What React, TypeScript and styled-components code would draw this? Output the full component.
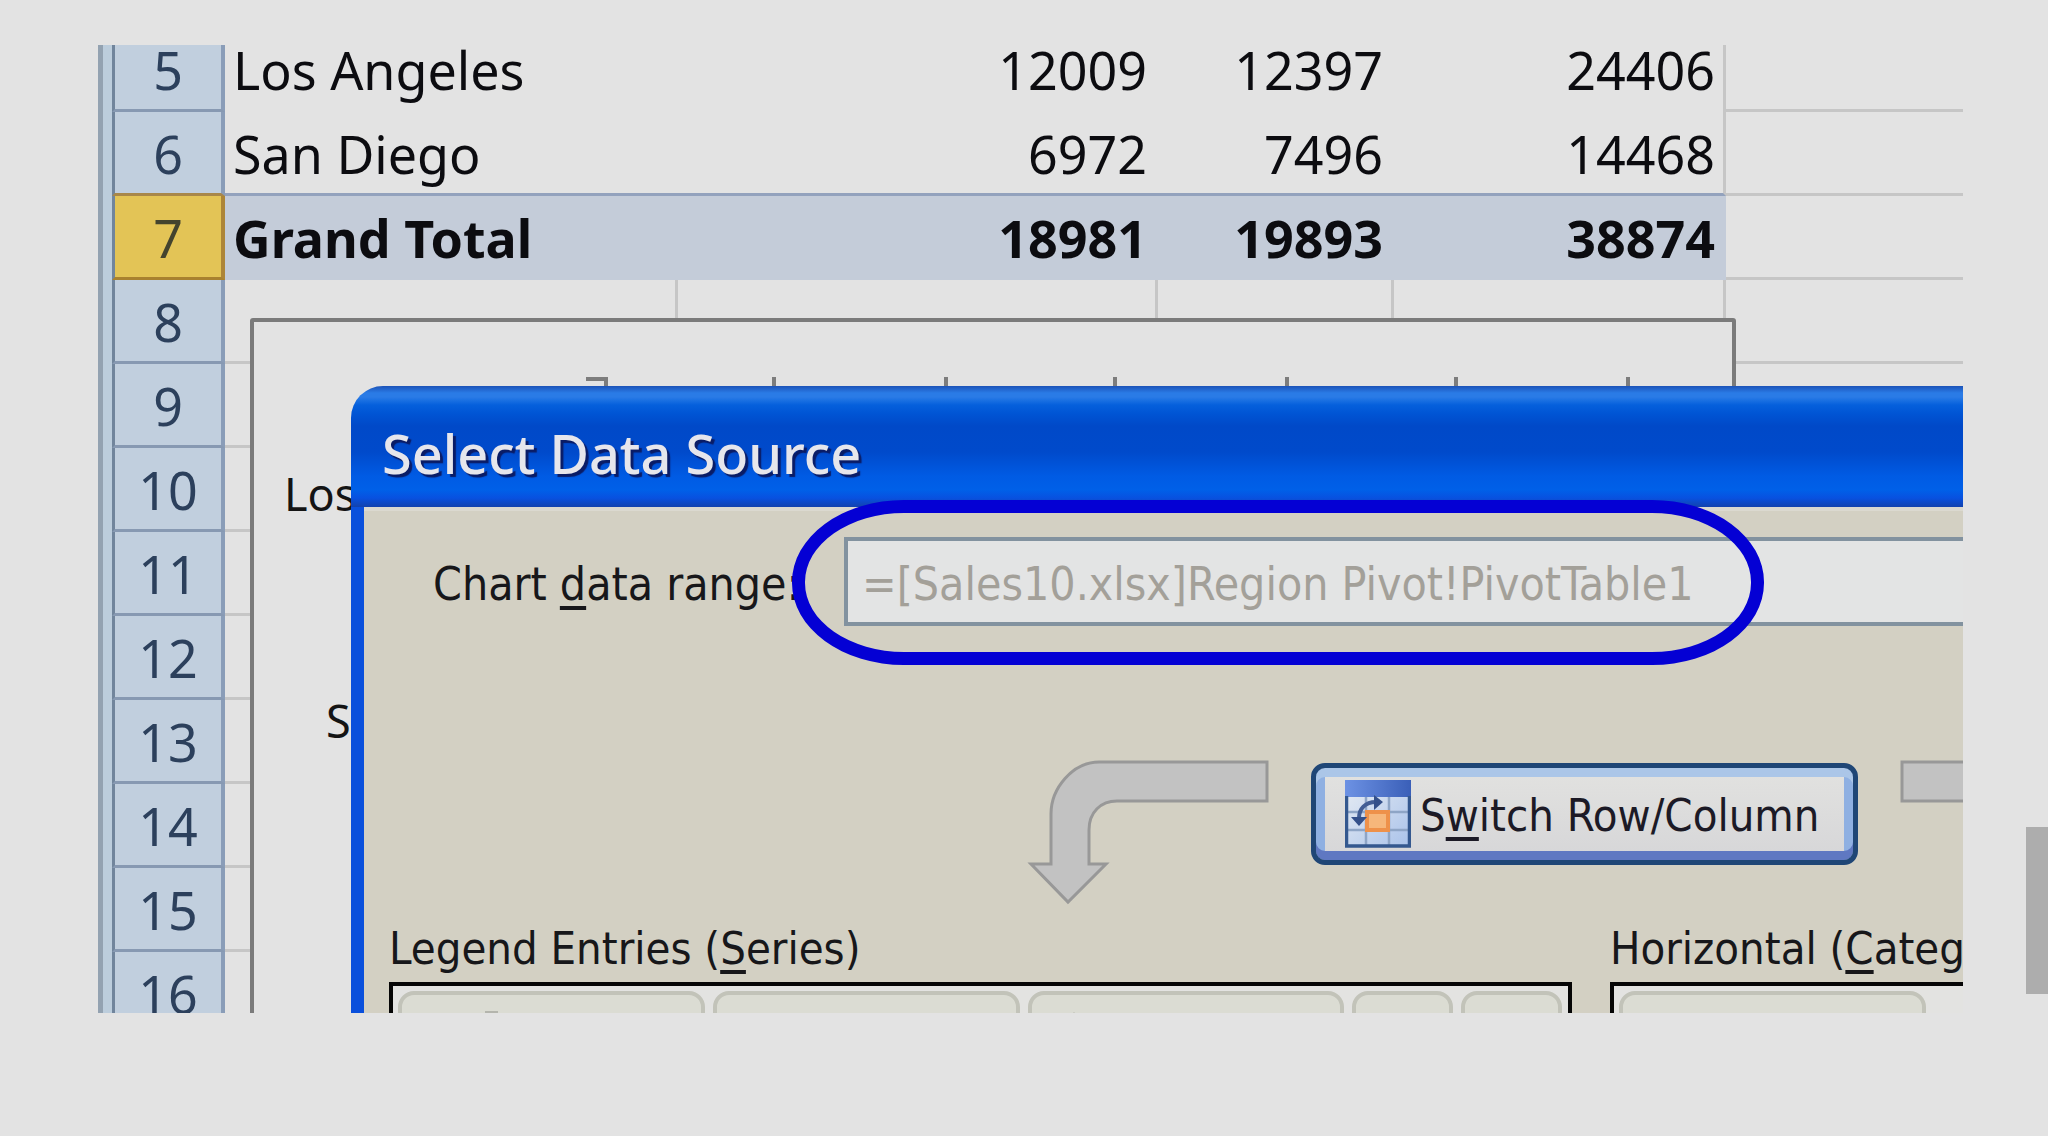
import React from "react";
import styled, { createGlobalStyle } from "styled-components";

const GlobalStyle = createGlobalStyle`
  *, *::before, *::after { box-sizing: border-box; }
  html, body { margin: 0; background: #e3e3e3; }
`;

const sheetFont = `"Noto Sans", "Open Sans", sans-serif`;
const dialogFont = `"DejaVu Sans Condensed", "Noto Sans", sans-serif`;

const Page = styled.div`
  position: relative;
  display: flex;
  height: 100vh;
  padding: 45px 85px 123px 98px;
  overflow: hidden;
  background: #e3e3e3;
`;

const ScrollThumb = styled.div`
  position: absolute;
  top: 827px;
  right: 0;
  width: 22px;
  height: 167px;
  background: #adadad;
`;

const Workbook = styled.main`
  position: relative;
  display: flex;
  align-items: flex-start;
  flex: 1;
  min-width: 0;
  overflow: hidden;
`;

const WindowEdge = styled.div`
  flex: 0 0 14px;
  align-self: stretch;
  background: #bccddc;
  border-left: 5px solid #93a2b1;
`;

const Sheet = styled.table`
  flex: 1;
  width: 100%;
  min-width: 0;
  table-layout: fixed;
  border-collapse: separate;
  border-spacing: 0;
  font-family: ${sheetFont};
  font-size: 52px;
  line-height: 50px;
  color: #0c0c10;
`;

const Col = styled.col<{ $w?: number }>`
  width: ${(p) => (p.$w ? `${p.$w}px` : "auto")};
`;

const Row = styled.tr<{ $first: boolean }>`
  height: ${(p) => (p.$first ? 67 : 84)}px;

  > * {
    padding-top: ${(p) => (p.$first ? 0 : 17)}px;
    padding-bottom: 0;
    vertical-align: top;
  }
`;

const RowHead = styled.th<{ $active: boolean; $beforeActive: boolean }>`
  padding-left: 0;
  padding-right: 0;
  font-weight: 400;
  text-align: center;
  color: ${(p) => (p.$active ? "#44442e" : "#2c405c")};
  background: ${(p) => (p.$active ? "#e3c456" : "#c1cfde")};
  border-left: 3px solid #71859c;
  border-right: 4px solid ${(p) => (p.$active ? "#ad8538" : "#8a9db8")};
  border-bottom: 3px solid
    ${(p) => (p.$active ? "#a8812f" : p.$beforeActive ? "#a8874a" : "#8799b2")};
`;

const Cell = styled.td<{
  $numeric?: boolean;
  $total?: boolean;
  $line?: string;
  $edge?: string;
}>`
  padding-left: 8px;
  padding-right: ${(p) => (p.$edge ? 8 : 11)}px;
  text-align: ${(p) => (p.$numeric ? "right" : "left")};
  font-weight: ${(p) => (p.$total ? 700 : 400)};
  white-space: nowrap;
  background: ${(p) => (p.$total ? "#c4ccd9" : "#e3e3e3")};
  border-bottom: ${(p) => (p.$line ? `3px solid ${p.$line}` : "0")};
  border-right: ${(p) => (p.$edge ? `3px solid ${p.$edge}` : "0")};
`;

const ChartFrame = styled.section`
  position: absolute;
  top: 273px;
  left: 152px;
  width: 1486px;
  bottom: -40px;
  padding: 142px 0 0 30px;
  background: #e3e3e3;
  border: 4px solid #7b7b7b;
  border-radius: 3px;
`;

const AxisTicks = styled.svg`
  position: absolute;
  top: 55px;
  left: 330px;
  width: 1060px;
  height: 14px;
`;

const AxisLabel = styled.div<{ $indent: number }>`
  height: 227px;
  padding-left: ${(p) => p.$indent}px;
  font-family: "Noto Sans", sans-serif;
  font-size: 45px;
  line-height: 60px;
  color: #141414;
`;

const Dialog = styled.section`
  position: absolute;
  top: 341px;
  left: 253px;
  right: 0;
  bottom: 0;
  display: flex;
  flex-direction: column;
  overflow: hidden;
  border-radius: 32px 0 0 0;
  font-family: ${dialogFont};
  font-size: 45px;
  line-height: 60px;
  color: #17171a;
`;

const TitleBar = styled.header`
  flex: 0 0 121px;
  padding: 30px 0 0 31px;
  background: linear-gradient(
    to bottom,
    #1c53b8 0,
    #2a7be6 7px,
    #2a7be6 11px,
    #0560dc 19px,
    #0054d4 28px,
    #0049c8 40px,
    #004acb 66px,
    #005be4 90px,
    #0060e8 104px,
    #0851e0 112px,
    #1242ae 121px
  );
`;

const Title = styled.h1`
  margin: 0;
  font-family: "Noto Sans", sans-serif;
  font-size: 54px;
  line-height: 74px;
  font-weight: 500;
  color: #e6e6ec;
  text-shadow: 3px 3px 1px #0a1c66;
`;

const Body = styled.div`
  flex: 1;
  min-height: 0;
  padding: 30px 0 0 25px;
  background: #d3d0c3;
  border-left: 13px solid #0a50dc;
  box-shadow: inset 0 4px 0 #dbd9d0;
`;

const RangeRow = styled.div`
  position: relative;
  display: flex;
  align-items: center;
  padding-left: 44px;
  font-size: 46px;
`;

const RangeLabel = styled.label`
  flex: 0 0 411px;
  padding-top: 4px;
  white-space: nowrap;
`;

const RangeInput = styled.input`
  flex: 1;
  min-width: 0;
  height: 89px;
  padding: 4px 0 0 14px;
  font: inherit;
  color: #a3a099;
  background: #e3e4e4;
  border: 4px solid #82929f;
  border-right: 0;
  border-radius: 0;
  outline: none;
`;

const Callout = styled.div`
  position: absolute;
  top: -37px;
  left: 403px;
  width: 972px;
  height: 165px;
  border: 13px solid #0400d4;
  border-radius: 112px / 82px;
  pointer-events: none;
`;

const Key = styled.u`
  text-decoration-thickness: 4px;
  text-underline-offset: 6px;
  text-decoration-skip-ink: none;
`;

const SwitchRow = styled.div`
  display: flex;
  align-items: flex-start;
  gap: 42px;
  margin-top: 134px;
  padding-left: 638px;
`;

const Arrow = styled.svg`
  flex: none;
  width: 242px;
  height: 145px;
`;

const SwitchButton = styled.button`
  display: flex;
  align-items: center;
  flex: none;
  gap: 9px;
  width: 547px;
  height: 102px;
  margin-top: 3px;
  padding: 0 0 0 29px;
  font: inherit;
  color: #1c1a26;
  white-space: nowrap;
  background: linear-gradient(#e2e2e0, #d6d6d8);
  border: 5px solid #1f4676;
  border-radius: 14px;
  box-shadow: inset 0 9px 0 #abc6e8, inset 0 -9px 0 #5f78c2,
    inset 9px 0 0 #8fb0e2, inset -9px 0 0 #8fb0e2;
`;

const SwitchText = styled.span`
  padding-top: 4px;
`;

const SwitchIcon = styled.svg`
  flex: none;
  width: 66px;
  height: 68px;
`;

const Panels = styled.div`
  display: flex;
  gap: 38px;
  margin-top: 14px;
`;

const Panel = styled.section`
  flex: 0 0 1183px;
`;

const PanelTitle = styled.h2`
  margin: 0 0 3px;
  font: inherit;
  white-space: nowrap;
`;

const ListBox = styled.div`
  display: flex;
  gap: 8px;
  height: 180px;
  padding: 5px;
  background: #e3e3e1;
  border: 4px solid #060606;
`;

const ListButton = styled.button<{ $w: number; $pad?: number }>`
  display: flex;
  align-items: flex-start;
  flex: 0 0 ${(p) => p.$w}px;
  height: 80px;
  padding: 14px 0 0 ${(p) => p.$pad ?? 0}px;
  background: #dbdcd3;
  border: 4px solid #c2c3b9;
  border-radius: 16px;
`;

const Glyph = styled.svg`
  flex: none;
  width: 26px;
  height: 20px;
`;

type RowData = { n: number; name?: string; values?: number[]; total?: boolean };

const rows: RowData[] = [
  { n: 5, name: "Los Angeles", values: [12009, 12397, 24406] },
  { n: 6, name: "San Diego", values: [6972, 7496, 14468] },
  { n: 7, name: "Grand Total", values: [18981, 19893, 38874], total: true },
  ...[8, 9, 10, 11, 12, 13, 14, 15, 16].map((n) => ({ n })),
];

const GRID = "#c6c6c6";
const TOTAL_RULE = "#93a2bd";

function SheetRow({ row, first }: { row: RowData; first: boolean }) {
  const filled = Boolean(row.values);
  const line = row.n === 6 ? TOTAL_RULE : filled ? undefined : GRID;
  const values: (number | undefined)[] = row.values ?? [undefined, undefined, undefined];
  return (
    <Row $first={first}>
      <RowHead scope="row" $active={Boolean(row.total)} $beforeActive={row.n === 6}>
        {row.n}
      </RowHead>
      <Cell $total={row.total} $line={line} $edge={filled ? undefined : GRID}>
        {row.name}
      </Cell>
      {values.map((value, i) => (
        <Cell
          key={i}
          $numeric
          $total={row.total}
          $line={line}
          $edge={row.total || (filled && i < 2) ? undefined : GRID}
        >
          {value}
        </Cell>
      ))}
      <Cell $line={GRID} />
    </Row>
  );
}

function BentArrow({ flipped }: { flipped?: boolean }) {
  return (
    <Arrow viewBox="0 0 242 145" aria-hidden="true">
      <path
        transform={flipped ? "translate(242 0) scale(-1 1)" : undefined}
        d="M240 2H72C46 2 24 28 24 54V104H4L41 142L79 104H62V70C62 52 74 41 90 41H240Z"
        fill="#c2c2c2"
        stroke="#989898"
        strokeWidth="3"
      />
    </Arrow>
  );
}

function SwitchGlyph() {
  return (
    <SwitchIcon viewBox="0 0 66 68" aria-hidden="true">
      <defs>
        <linearGradient id="head" x1="0" x2="1">
          <stop offset="0" stopColor="#6d92e4" />
          <stop offset="1" stopColor="#3a5fb8" />
        </linearGradient>
        <linearGradient id="grid" x1="0" y1="0" x2="1" y2="1">
          <stop offset="0" stopColor="#e8edf3" />
          <stop offset="1" stopColor="#a9c2ea" />
        </linearGradient>
      </defs>
      <rect x="1" y="1" width="64" height="66" fill="url(#grid)" />
      <rect width="66" height="17" fill="url(#head)" />
      <path d="M21 17V66M44 17V66M2 32H64M2 50H64" stroke="#8ea5c6" strokeWidth="2.5" />
      <path d="M1.5 16V66M0 66H66M64.5 16V67" stroke="#34588f" strokeWidth="3.5" />
      <rect x="22" y="32" width="21" height="18" fill="#f6b77b" stroke="#ee914a" strokeWidth="4" />
      <path d="M14 38C14 29 20 22 31 22" fill="none" stroke="#425d94" strokeWidth="4" />
      <path d="M29 15L38 22L29 30Z M6 37H22L14 46Z" fill="#34508a" />
    </SwitchIcon>
  );
}

export default function App() {
  return (
    <>
      <GlobalStyle />
      <Page>
        <Workbook>
          <WindowEdge />
          <Sheet>
            <colgroup>
              <Col $w={113} />
              <Col $w={453} />
              <Col $w={480} />
              <Col $w={236} />
              <Col $w={332} />
              <Col />
            </colgroup>
            <tbody>
              {rows.map((row, i) => (
                <SheetRow key={row.n} row={row} first={i === 0} />
              ))}
            </tbody>
          </Sheet>

          <ChartFrame>
            <AxisTicks viewBox="0 0 1060 14" aria-hidden="true">
              <path
                d="M2 2H22V14M190 0V14M362 0V14M531 0V14M703 0V14M872 0V14M1044 0V14"
                fill="none"
                stroke="#7d7d7d"
                strokeWidth="4"
              />
            </AxisTicks>
            <AxisLabel $indent={0}>Los</AxisLabel>
            <AxisLabel $indent={42}>S</AxisLabel>
          </ChartFrame>

          <Dialog>
            <TitleBar>
              <Title>Select Data Source</Title>
            </TitleBar>
            <Body>
              <RangeRow>
                <RangeLabel htmlFor="range">
                  Chart <Key>d</Key>ata range:
                </RangeLabel>
                <RangeInput
                  id="range"
                  readOnly
                  defaultValue="=[Sales10.xlsx]Region Pivot!PivotTable1"
                />
                <Callout />
              </RangeRow>
              <SwitchRow>
                <BentArrow />
                <SwitchButton type="button">
                  <SwitchGlyph />
                  <SwitchText>
                    S<Key>w</Key>itch Row/Column
                  </SwitchText>
                </SwitchButton>
                <BentArrow flipped />
              </SwitchRow>
              <Panels>
                <Panel>
                  <PanelTitle>
                    Legend Entries (<Key>S</Key>eries)
                  </PanelTitle>
                  <ListBox>
                    <ListButton type="button" $w={307} $pad={80}>
                      <Glyph viewBox="0 0 26 20" aria-hidden="true">
                        <path d="M3 4H16" fill="none" stroke="#b4b5ad" strokeWidth="4" />
                      </Glyph>
                    </ListButton>
                    <ListButton type="button" $w={307} />
                    <ListButton type="button" $w={316} $pad={34}>
                      <Glyph viewBox="0 0 26 20" aria-hidden="true">
                        <path d="M3 12L8 3L13 12Z" fill="#a5a69f" />
                      </Glyph>
                    </ListButton>
                    <ListButton type="button" $w={101} />
                    <ListButton type="button" $w={101} />
                  </ListBox>
                </Panel>
                <Panel>
                  <PanelTitle>
                    Horizontal (<Key>C</Key>ateg
                  </PanelTitle>
                  <ListBox>
                    <ListButton type="button" $w={307} />
                  </ListBox>
                </Panel>
              </Panels>
            </Body>
          </Dialog>
        </Workbook>
        <ScrollThumb />
      </Page>
    </>
  );
}
